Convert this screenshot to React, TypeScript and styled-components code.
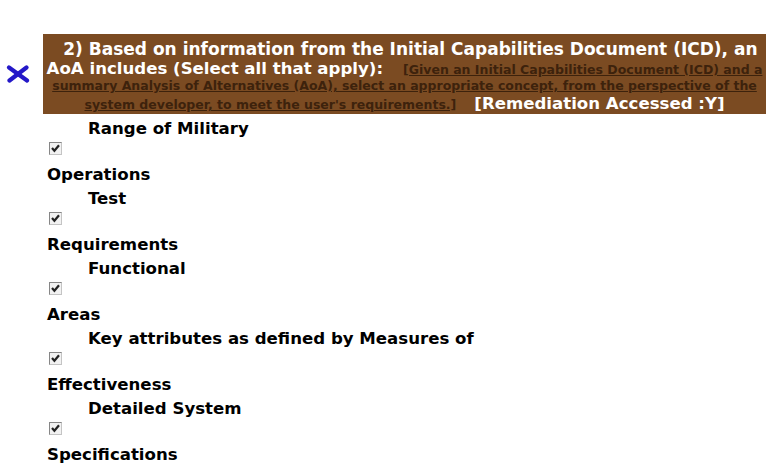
import React from "react";
import styled, { createGlobalStyle } from "styled-components";

const Global = createGlobalStyle`
  html, body { margin: 0; padding: 0; background: #ffffff; }
  body { font-family: "DejaVu Sans", Verdana, sans-serif; }
`;

const Page = styled.div`
  display: flex;
  align-items: flex-start;
  padding-top: 34px;
`;

const MarkCol = styled.div`
  width: 43px;
  height: 80px;
  display: flex;
  align-items: center;
  padding-left: 6px;
  box-sizing: border-box;
`;

const Content = styled.div`
  width: 723px;
  display: flex;
  flex-direction: column;
`;

const QuestionBox = styled.div`
  background: #7b4b22;
  text-align: center;
  padding: 6px 0 1px 0;
  font-size: 12.5px;
  line-height: 16px;
  font-weight: bold;
  white-space: nowrap;
`;

const Title = styled.span<{ $size?: number }>`
  color: #ffffff;
  font-size: ${(p) => p.$size ?? 16.6}px;
  line-height: 19px;
  font-weight: bold;
`;

const Hint = styled.a<{ $gap?: number }>`
  color: #3d220c;
  text-decoration: underline;
  font-size: 12.5px;
  font-weight: bold;
  margin-left: ${(p) => p.$gap ?? 0}px;
`;

const Status = styled.span<{ $gap?: number }>`
  color: #ffffff;
  font-size: 16.6px;
  line-height: 19px;
  font-weight: bold;
  margin-left: ${(p) => p.$gap ?? 0}px;
`;

const List = styled.div`
  display: flex;
  flex-direction: column;
  margin-top: 4px;
  padding-left: 4px;
`;

const Item = styled.div`
  height: 70px;
  display: flex;
  flex-direction: column;
  font-size: 16.6px;
  font-weight: bold;
  color: #000;
`;

const TextLine = styled.div<{ $indent?: number }>`
  height: 22px;
  line-height: 22px;
  padding-left: ${(p) => p.$indent ?? 0}px;
  white-space: nowrap;
`;

const CheckRow = styled.div`
  height: 24px;
  display: flex;
  align-items: flex-start;
  padding-top: 2px;
  box-sizing: border-box;
`;

const Box = styled.span`
  width: 13px;
  height: 13px;
  margin-left: 2px;
  box-sizing: border-box;
  border: 1px solid #868686;
  border-right-color: #c4c4c4;
  border-bottom-color: #c4c4c4;
  background: #f2f2f2;
  display: flex;
  align-items: center;
  justify-content: center;
`;

const Check = () => (
  <Box>
    <svg width="9" height="9" viewBox="0 0 9 9">
      <path d="M1 4 L3.4 6.8 L8 1.2" fill="none" stroke="#222" strokeWidth="2.2" />
    </svg>
  </Box>
);

const Cross = () => (
  <svg width="24" height="18" viewBox="0 0 24 18">
    <path d="M3 2.5 L21 15.5" stroke="#2418c8" strokeWidth="4.2" strokeLinecap="round" />
    <path d="M20.5 2.5 L3.5 15.5" stroke="#2418c8" strokeWidth="4.2" strokeLinecap="round" />
  </svg>
);

const items: [string, string][] = [
  ["Range of Military", "Operations"],
  ["Test", "Requirements"],
  ["Functional", "Areas"],
  ["Key attributes as defined by Measures of", "Effectiveness"],
  ["Detailed System", "Specifications"],
];

export default function App() {
  return (
    <>
      <Global />
      <Page>
        <MarkCol>
          <Cross />
        </MarkCol>
        <Content>
          <QuestionBox>
            <Title $size={17}>{"\u00a0\u00a02) Based on information from the Initial Capabilities Document (ICD), an"}</Title>
            <br />
            <Title>AoA includes (Select all that apply):</Title>
            <Hint $gap={20}>[Given an Initial Capabilities Document (ICD) and a</Hint>
            <br />
            <Hint>summary Analysis of Alternatives (AoA), select an appropriate concept, from the perspective of the</Hint>
            <br />
            <Hint>system developer, to meet the user's requirements.]</Hint>
            <Status $gap={18}>[Remediation Accessed :Y]</Status>
          </QuestionBox>
          <List>
            {items.map(([a, b]) => (
              <Item key={a}>
                <TextLine $indent={41}>{a}</TextLine>
                <CheckRow>
                  <Check />
                </CheckRow>
                <TextLine>{b}</TextLine>
              </Item>
            ))}
          </List>
        </Content>
      </Page>
    </>
  );
}
